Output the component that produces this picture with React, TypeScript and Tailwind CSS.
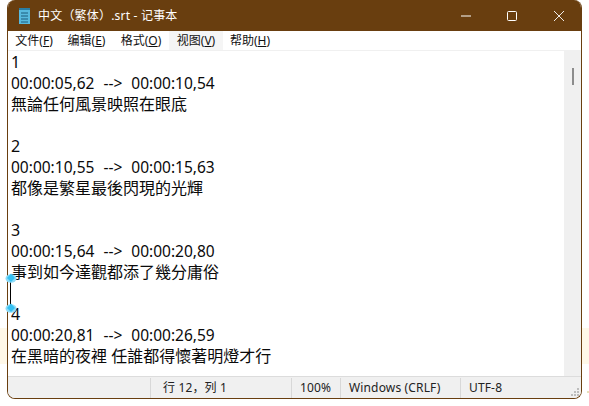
const ui = '"Noto Sans","Noto Sans CJK SC",sans-serif';
const Menu = ({ t, k, className }: { t: string; k: string; className: string }) => (
  <div className={`h-[19px] flex items-center justify-center ${className}`}>
    {t}(<span className="underline">{k}</span>)
  </div>
);
const lines = [
  "1", "00:00:05,62 --> 00:00:10,54", "無論任何風景映照在眼底", "",
  "2", "00:00:10,55 --> 00:00:15,63", "都像是繁星最後閃現的光輝", "",
  "3", "00:00:15,64 --> 00:00:20,80", "事到如今達觀都添了幾分庸俗", "",
  "4", "00:00:20,81 --> 00:00:26,59", "在黑暗的夜裡 任誰都得懷著明燈才行",
];
const Handle = ({ className }: { className: string }) => (
  <svg className={`absolute ${className}`} width="12" height="10" viewBox="0 0 12 10">
    <ellipse cx="6" cy="5.5" rx="5.5" ry="4.2" fill="#8fdcf8" />
    <path d="M6 0.5l4 4.5-4 4-4-4z" fill="#35c0f2" />
  </svg>
);
export default function App() {
  return (
    <div className="w-[589px] h-[406px] bg-white relative overflow-hidden" style={{ fontFamily: ui }}>
      <div className="absolute left-0 top-[328px] w-[7px] h-[36px] bg-[#fff8e8]" />
      <div className="absolute right-0 top-[328px] w-[7px] h-[36px] bg-[#fff8e8]" />
      <div className="absolute left-[587px] top-[391px] w-[2px] h-[2px] bg-[#e8e0b8]" />
      <div className="ml-[7px] w-[575px] h-[399px] rounded-[8px] border-x border-b border-[#693e0f] flex flex-col overflow-hidden bg-white">
        <div className="h-[31px] -mx-px bg-[#693e0f] flex items-center text-white shrink-0">
          <svg className="ml-[12px]" width="11" height="16" viewBox="0 0 11 16">
            <rect x="0" y="0" width="11" height="16" fill="#58b9dd" />
            <rect x="0" y="0" width="11" height="2" fill="#2a7ea3" />
            <path d="M2 5h7M2 8h7M2 11h7M2 14h7" stroke="#1c5d7c" strokeWidth="1" />
          </svg>
          <div className="ml-[8px] text-[12px] tracking-[0.2px] whitespace-pre leading-none">中文（繁体）.srt - 记事本</div>
          <div className="ml-auto flex items-center">
            <svg className="mr-[36px]" width="10" height="10" viewBox="0 0 10 10"><path d="M0 5h10" stroke="#fff" /></svg>
            <svg className="mr-[37px]" width="10" height="10" viewBox="0 0 10 10"><rect x="0.5" y="0.5" width="9" height="9" rx="1" fill="none" stroke="#fff" /></svg>
            <svg className="mr-[18px]" width="10" height="10" viewBox="0 0 10 10"><path d="M0 0l10 10M10 0L0 10" stroke="#fff" strokeWidth="0.9" /></svg>
          </div>
        </div>
        <div className="h-[19px] shrink-0 flex text-[12px] text-[#111] bg-white">
          <Menu t="文件" k="F" className="w-[52px]" />
          <Menu t="编辑" k="E" className="w-[53px]" />
          <Menu t="格式" k="O" className="w-[56px]" />
          <Menu t="视图" k="V" className="w-[54px] bg-[#f5f5f5]" />
          <Menu t="帮助" k="H" className="w-[54px]" />
        </div>
        <div className="h-px bg-[#f0f0f0] shrink-0" />
        <div className="flex-1 flex min-h-0">
          <div className="flex-1 pl-[3px] pt-px overflow-hidden text-[16px] text-[#0a0a0a]">
            {lines.map((l, i) => (
              <div key={i} className={`h-[21px] leading-[21px] whitespace-pre ${i % 4 === 1 ? "text-[15.5px] [word-spacing:5px]" : ""}`}>{l}</div>
            ))}
          </div>
          <div className="w-[17px] bg-[#f0f0f0] flex justify-center pt-[17px]">
            <div className="w-[2px] h-[17px] bg-[#8c8c8c]" />
          </div>
        </div>
        <div className="h-[22px] shrink-0 bg-[#f0f0f0] border-t border-[#dcdcdc] flex items-center text-[12px] tracking-[0.15px] text-[#222] relative">
          <div className="w-[142px]" />
          <div className="w-[141px] h-[20px] border-l border-[#d8d8d8] pl-[12px] flex items-center">行 12，列 1</div>
          <div className="w-[49px] h-[20px] border-l border-[#d8d8d8] pl-[8px] flex items-center">100%</div>
          <div className="w-[120px] h-[20px] border-l border-[#d8d8d8] pl-[8px] flex items-center">Windows (CRLF)</div>
          <div className="h-[20px] border-l border-[#d8d8d8] pl-[8px] flex items-center">UTF-8</div>
          <svg className="absolute right-[1px] bottom-[1px]" width="10" height="10" viewBox="0 0 10 10" fill="#bdbdbd">
            <rect x="7" y="1" width="2" height="2" /><rect x="4" y="4" width="2" height="2" /><rect x="7" y="4" width="2" height="2" />
            <rect x="1" y="7" width="2" height="2" /><rect x="4" y="7" width="2" height="2" /><rect x="7" y="7" width="2" height="2" />
          </svg>
        </div>
      </div>
      <div className="absolute left-[10px] top-[278px] w-[1px] h-[30px] bg-black" />
      <Handle className="left-[5px] top-[273px]" />
      <Handle className="left-[5px] top-[303px]" />
    </div>
  );
}
